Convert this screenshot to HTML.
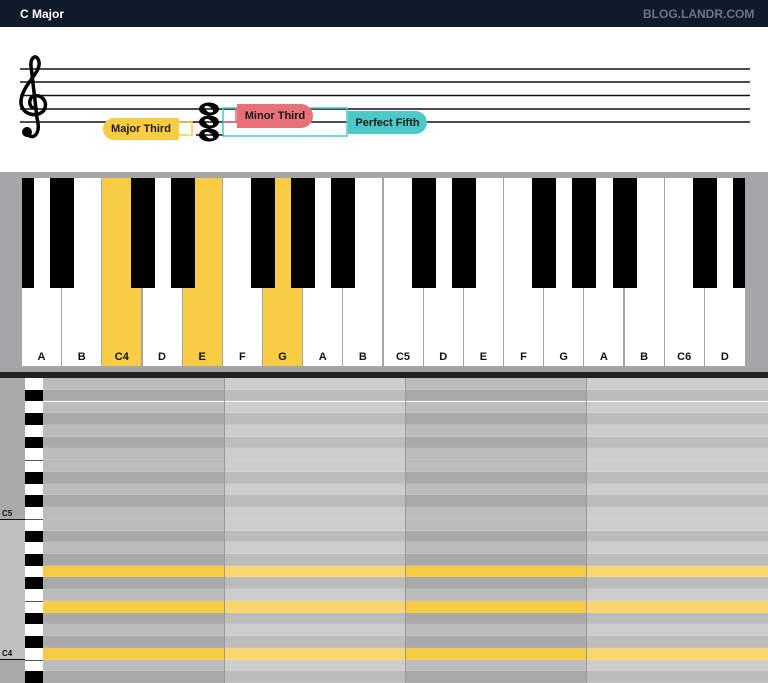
<!DOCTYPE html>
<html><head><meta charset="utf-8"><style>
*{margin:0;padding:0;box-sizing:border-box}
body{width:768px;height:683px;overflow:hidden;background:#fff;position:relative;font-family:"Liberation Sans",sans-serif}
.a{position:absolute}
.hdr{left:0;top:0;width:768px;height:27px;background:#0f1a2a}
.wk{position:absolute;top:178px;height:188px;width:39px;background:#fff}
.wk span{position:absolute;bottom:3px;left:0;width:100%;text-align:center;font-size:11px;font-weight:bold;color:#111}
.y{background:#f9cc45}
.bk{position:absolute;top:178px;height:110px;width:24px;background:#000}
.row{position:absolute;left:43px;width:725px;height:11.73px;border-bottom:1px solid rgba(255,255,255,0.12)}
.w{background:linear-gradient(to right,#bcbcbc 0 181px,#cdcdcd 181px 362px,#bcbcbc 362px 543px,#cdcdcd 543px)}
.b{background:linear-gradient(to right,#a9a9a9 0 181px,#bcbcbc 181px 362px,#a9a9a9 362px 543px,#bcbcbc 543px)}
.Y{background:linear-gradient(to right,#f8cb45 0 181px,#fbd66c 181px 362px,#f8cb45 362px 543px,#fbd66c 543px)}
.kc{position:absolute;left:25px;width:18px;height:11.73px}
.kw{background:#fff}.kb{background:#000}
.pill{position:absolute;font-size:11px;font-weight:bold;color:#1a1a1a;display:flex;align-items:center;justify-content:center}
</style></head><body>
<div class="a hdr"></div>
<div class="a" style="left:20px;top:7px;color:#fff;font-size:12px;font-weight:bold">C Major</div>
<div class="a" style="left:643px;top:7px;color:#6b7584;font-size:12px;font-weight:bold">BLOG.LANDR.COM</div>

<svg class="a" style="left:0;top:27px" width="768" height="145" viewBox="0 27 768 145">
<g stroke="#111" stroke-width="1.6">
<line x1="20" y1="69" x2="750" y2="69"/><line x1="20" y1="82" x2="750" y2="82"/><line x1="20" y1="95.5" x2="750" y2="95.5"/><line x1="20" y1="109" x2="750" y2="109"/><line x1="20" y1="122" x2="750" y2="122"/>
<line x1="196" y1="135" x2="224" y2="135"/>
</g>
<path d="M27,134 C34,141 41,133 37,118 L31,66 C30,57 37,53 39,62 C41,73 22,85 21,101 C20,116 41,119 45,108 C48,98 36,92 31,98 C28,103 31,108 34,108" fill="none" stroke="#000" stroke-width="3.5"/>
<circle cx="27" cy="132" r="5" fill="#000"/>
<g fill="#000">
<path fill-rule="evenodd" d="M199,109a10,6.5 0 1,0 20,0a10,6.5 0 1,0 -20,0Z M205,106.5c2,-2 7,1 8,4c1,2 -4,3 -6,0.5c-2,-2 -3,-3.5 -2,-4.5Z"/>
<path fill-rule="evenodd" d="M199,122a10,6.5 0 1,0 20,0a10,6.5 0 1,0 -20,0Z M205,119.5c2,-2 7,1 8,4c1,2 -4,3 -6,0.5c-2,-2 -3,-3.5 -2,-4.5Z"/>
<path fill-rule="evenodd" d="M199,135a10,6.5 0 1,0 20,0a10,6.5 0 1,0 -20,0Z M205,132.5c2,-2 7,1 8,4c1,2 -4,3 -6,0.5c-2,-2 -3,-3.5 -2,-4.5Z"/>
</g>
<path d="M179,122 H192 V135 H179" fill="none" stroke="#f9cc45" stroke-width="1.5"/>
<rect x="223" y="108" width="124" height="28" fill="none" stroke="#4cc9c6" stroke-width="1.5"/>
<path d="M236,108 V122 H224" fill="none" stroke="#e8707a" stroke-width="1.5"/>
</svg>
<div class="pill" style="left:103px;top:118px;width:76px;height:22px;background:#f9cc45;border-radius:11px 0 0 11px">Major Third</div>
<div class="pill" style="left:237px;top:104px;width:76px;height:24px;background:#e8707a;border-radius:0 12px 12px 0">Minor Third</div>
<div class="pill" style="left:348px;top:111px;width:79px;height:23px;background:#4cc9c6;border-radius:0 12px 12px 0">Perfect Fifth</div>

<div class="a" style="left:0;top:172px;width:768px;height:200px;background:#a6a6a8"></div>
<div class="wk" style="left:22px"><span>A</span></div>
<div class="wk" style="left:62.2px"><span>B</span></div>
<div class="wk y" style="left:102.3px"><span>C4</span></div>
<div class="wk" style="left:142.5px"><span>D</span></div>
<div class="wk y" style="left:182.7px"><span>E</span></div>
<div class="wk" style="left:222.9px"><span>F</span></div>
<div class="wk y" style="left:263px"><span>G</span></div>
<div class="wk" style="left:303.2px"><span>A</span></div>
<div class="wk" style="left:343.4px"><span>B</span></div>
<div class="wk" style="left:383.5px"><span>C5</span></div>
<div class="wk" style="left:423.7px"><span>D</span></div>
<div class="wk" style="left:463.9px"><span>E</span></div>
<div class="wk" style="left:504px"><span>F</span></div>
<div class="wk" style="left:544.2px"><span>G</span></div>
<div class="wk" style="left:584.4px"><span>A</span></div>
<div class="wk" style="left:624.6px"><span>B</span></div>
<div class="wk" style="left:664.7px"><span>C6</span></div>
<div class="wk" style="left:704.9px;width:40px"><span>D</span></div>
<div class="bk" style="left:22px;width:12px"></div>
<div class="bk" style="left:50px"></div>
<div class="bk" style="left:130.5px"></div>
<div class="bk" style="left:170.7px"></div>
<div class="bk" style="left:251px"></div>
<div class="bk" style="left:291.2px"></div>
<div class="bk" style="left:331.4px"></div>
<div class="bk" style="left:411.7px"></div>
<div class="bk" style="left:451.9px"></div>
<div class="bk" style="left:532.2px"></div>
<div class="bk" style="left:572.4px"></div>
<div class="bk" style="left:612.6px"></div>
<div class="bk" style="left:692.9px"></div>
<div class="bk" style="left:733px;width:12px"></div>

<div class="a" style="left:0;top:372px;width:768px;height:6px;background:#222"></div>
<div class="a" style="left:0;top:378px;width:25px;height:142px;background:#a9a9a9"></div>
<div class="a" style="left:0;top:520px;width:25px;height:140px;background:#bfbfbf"></div>
<div class="a" style="left:0;top:660px;width:25px;height:23px;background:#a9a9a9"></div>
<div class="a" style="left:2px;top:509px;font-size:8px;font-weight:bold;color:#111">C5</div>
<div class="a" style="left:0;top:519px;width:25px;height:1px;background:#111"></div>
<div class="a" style="left:2px;top:649px;font-size:8px;font-weight:bold;color:#111">C4</div>
<div class="a" style="left:0;top:659px;width:25px;height:1px;background:#111"></div>

<div class="row w" style="top:378px"></div><div class="kc kw" style="top:378px"></div>
<div class="row b" style="top:389.7px"></div><div class="kc kb" style="top:389.7px"></div>
<div class="row w" style="top:401.5px"></div><div class="kc kw" style="top:401.5px"></div>
<div class="row b" style="top:413.2px"></div><div class="kc kb" style="top:413.2px"></div>
<div class="row w" style="top:424.9px"></div><div class="kc kw" style="top:424.9px"></div>
<div class="row b" style="top:436.7px"></div><div class="kc kb" style="top:436.7px"></div>
<div class="row w" style="top:448.4px"></div><div class="kc kw" style="top:448.4px"></div>
<div class="row w" style="top:460.1px"></div><div class="kc kw" style="top:460.1px;border-top:1px solid #555"></div>
<div class="row b" style="top:471.8px"></div><div class="kc kb" style="top:471.8px"></div>
<div class="row w" style="top:483.6px"></div><div class="kc kw" style="top:483.6px"></div>
<div class="row b" style="top:495.3px"></div><div class="kc kb" style="top:495.3px"></div>
<div class="row w" style="top:507px"></div><div class="kc kw" style="top:507px"></div>
<div class="row w" style="top:518.8px"></div><div class="kc kw" style="top:518.8px;border-top:1px solid #555"></div>
<div class="row b" style="top:530.5px"></div><div class="kc kb" style="top:530.5px"></div>
<div class="row w" style="top:542.2px"></div><div class="kc kw" style="top:542.2px"></div>
<div class="row b" style="top:554px"></div><div class="kc kb" style="top:554px"></div>
<div class="row Y" style="top:565.7px"></div><div class="kc kw" style="top:565.7px"></div>
<div class="row b" style="top:577.4px"></div><div class="kc kb" style="top:577.4px"></div>
<div class="row w" style="top:589.1px"></div><div class="kc kw" style="top:589.1px"></div>
<div class="row Y" style="top:600.9px"></div><div class="kc kw" style="top:600.9px;border-top:1px solid #555"></div>
<div class="row b" style="top:612.6px"></div><div class="kc kb" style="top:612.6px"></div>
<div class="row w" style="top:624.3px"></div><div class="kc kw" style="top:624.3px"></div>
<div class="row b" style="top:636.1px"></div><div class="kc kb" style="top:636.1px"></div>
<div class="row Y" style="top:647.8px"></div><div class="kc kw" style="top:647.8px"></div>
<div class="row w" style="top:659.5px"></div><div class="kc kw" style="top:659.5px;border-top:1px solid #555"></div>
<div class="row b" style="top:671.3px"></div><div class="kc kb" style="top:671.3px"></div>
<div class="a" style="left:224px;top:378px;width:1px;height:305px;background:#999"></div>
<div class="a" style="left:405px;top:378px;width:1px;height:305px;background:#999"></div>
<div class="a" style="left:586px;top:378px;width:1px;height:305px;background:#999"></div>
</body></html>
